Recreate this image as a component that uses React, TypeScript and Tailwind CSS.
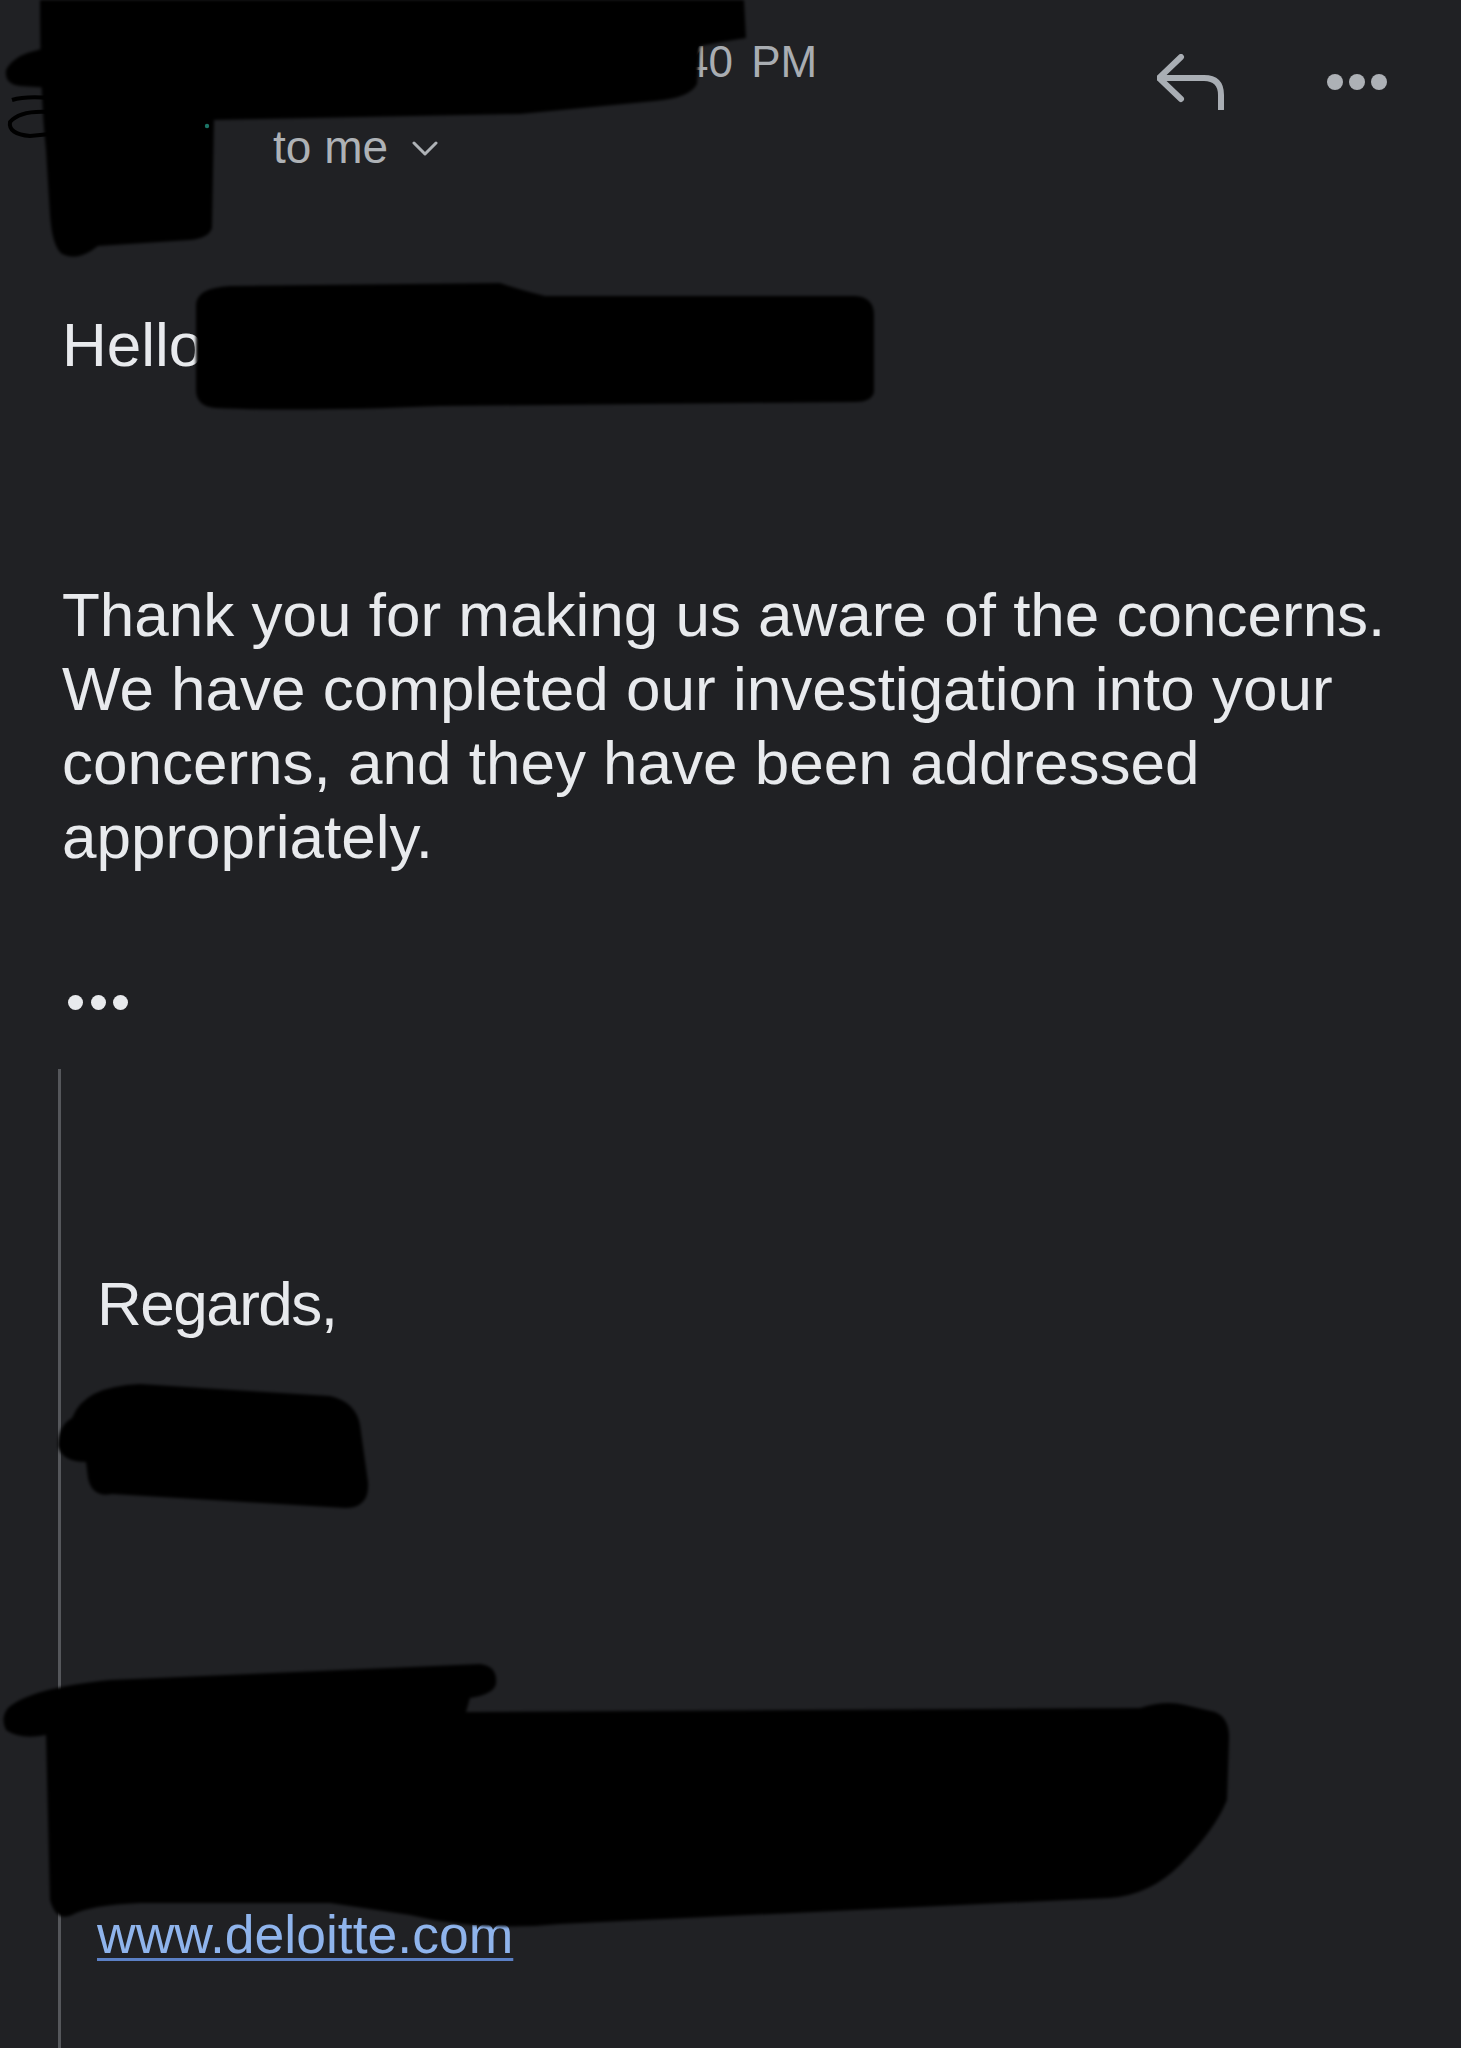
import React from "react";

function Redactions() {
  return (
    <svg
      className="pointer-events-none absolute left-0 top-0"
      width="1461"
      height="2048"
      viewBox="0 0 1461 2048"
      aria-hidden="true"
    >
      <defs>
        <filter id="soft" x="-5%" y="-5%" width="110%" height="110%">
          <feGaussianBlur stdDeviation="1.6" />
        </filter>
      </defs>
      <g fill="#000" filter="url(#soft)">
        {/* header: sender name + avatar */}
        <path d="M 40 0 L 744 0 L 746 38 Q 720 42 700 46 L 697 84 Q 690 98 655 101 L 520 114 L 214 120 L 212 228 Q 209 238 190 240 L 98 246 Q 78 262 62 254 Q 52 246 50 215 L 46 150 Q 40 95 40 0 Z" />
        <path d="M 50 48 Q 15 52 6 70 Q 4 84 20 86 L 52 88 Z" />
        {/* hello name */}
        <path d="M 196 305 Q 196 288 230 286 L 500 283 Q 520 290 545 296 L 855 296 Q 874 297 874 315 L 874 392 Q 872 402 855 402 L 440 406 Q 300 412 215 408 Q 196 406 196 390 Z" />
        {/* signature name */}
        <path d="M 72 1418 Q 84 1386 140 1384 L 330 1396 Q 356 1402 360 1425 L 368 1482 Q 370 1508 345 1508 L 112 1494 Q 92 1498 88 1478 L 86 1462 Q 62 1462 58 1446 Q 58 1426 72 1418 Z" />
        {/* signature block */}
        <path d="M 8 1708 Q 30 1688 110 1680 L 480 1664 Q 498 1666 496 1684 Q 494 1694 470 1698 L 466 1712 L 1140 1708 Q 1165 1700 1185 1705 L 1215 1712 Q 1230 1718 1229 1740 L 1227 1800 Q 1215 1830 1180 1865 Q 1150 1895 1110 1898 L 560 1924 Q 480 1932 410 1915 L 330 1903 L 140 1903 Q 90 1905 72 1915 Q 56 1922 50 1900 L 46 1735 Q 20 1740 6 1730 Q 0 1718 8 1708 Z" />
      </g>
      <path
        d="M 50 112 Q 20 110 10 122 Q 8 134 30 136 L 50 134"
        fill="none"
        stroke="#000"
        strokeWidth="4"
      />
      <path d="M 50 98 Q 25 96 12 100" fill="none" stroke="#000" strokeWidth="4" />
      <circle cx="207" cy="126" r="2.2" fill="#1c7466" />
    </svg>
  );
}

export default function App() {
  return (
    <div className="relative h-[2048px] w-[1461px] overflow-hidden bg-[#202124] font-['Liberation_Sans',Arial,sans-serif]">
      <header className="flex h-[308px] items-start pt-[40px]">
        <div className="w-[273px] shrink-0" />
        <div className="flex-1">
          <div className="pl-[411px] text-[44px] leading-[44px] text-[#a9adb2] [word-spacing:6px]">
            40 PM
          </div>
          <div className="mt-[40px] flex items-center text-[46px] leading-[46px] text-[#aeb2b6]">
            <span>to me</span>
            <svg className="ml-[24px] mt-[4px]" width="26" height="16" viewBox="0 0 26 16">
              <polyline
                points="2,2 13,13 24,2"
                fill="none"
                stroke="#aeb2b6"
                strokeWidth="3"
                strokeLinecap="round"
                strokeLinejoin="round"
              />
            </svg>
          </div>
        </div>
        <div className="flex items-start gap-[100px] pr-[74px]">
          <svg className="mt-[14px]" width="70" height="56" viewBox="0 0 70 56">
            <path
              d="M 24 3 L 2 24 L 24 45 M 2 24 H 47 Q 64 24 64 41 V 55"
              fill="none"
              stroke="#a9aeb4"
              strokeWidth="6"
              strokeLinecap="round"
              strokeLinejoin="round"
            />
          </svg>
          <svg className="mt-[34px]" width="60" height="16" viewBox="0 0 60 16">
            <circle cx="8" cy="8" r="8" fill="#adb1b6" />
            <circle cx="30" cy="8" r="8" fill="#adb1b6" />
            <circle cx="52" cy="8" r="8" fill="#adb1b6" />
          </svg>
        </div>
      </header>

      <main className="pl-[62px] pr-[60px] text-[62px] leading-[74px] text-[#e8eaed]">
        <p>Hello</p>
        <p className="mt-[196px]">
          Thank you for making us aware of the concerns. We have completed our investigation into
          your concerns, and they have been addressed appropriately.
        </p>
        <div className="ml-[6px] mt-[121px] flex gap-[7.5px]">
          <span className="h-[15px] w-[15px] rounded-full bg-[#e8eaed]" />
          <span className="h-[15px] w-[15px] rounded-full bg-[#e8eaed]" />
          <span className="h-[15px] w-[15px] rounded-full bg-[#e8eaed]" />
        </div>
        <blockquote className="-ml-[4px] mt-[59px] border-l-[3px] border-[#55575b] pb-[200px] pl-[36px] pt-[198px]">
          <p className="tracking-[-1.5px]">Regards,</p>
          <div className="h-[563px]" />
          <a
            href="#"
            className="block w-fit text-[53.5px] leading-[62px] text-[#8fb4ec] underline decoration-[#5b80c5] decoration-[3px] underline-offset-[5px]"
          >
            www.deloitte.com
          </a>
        </blockquote>
      </main>

      <Redactions />
    </div>
  );
}
